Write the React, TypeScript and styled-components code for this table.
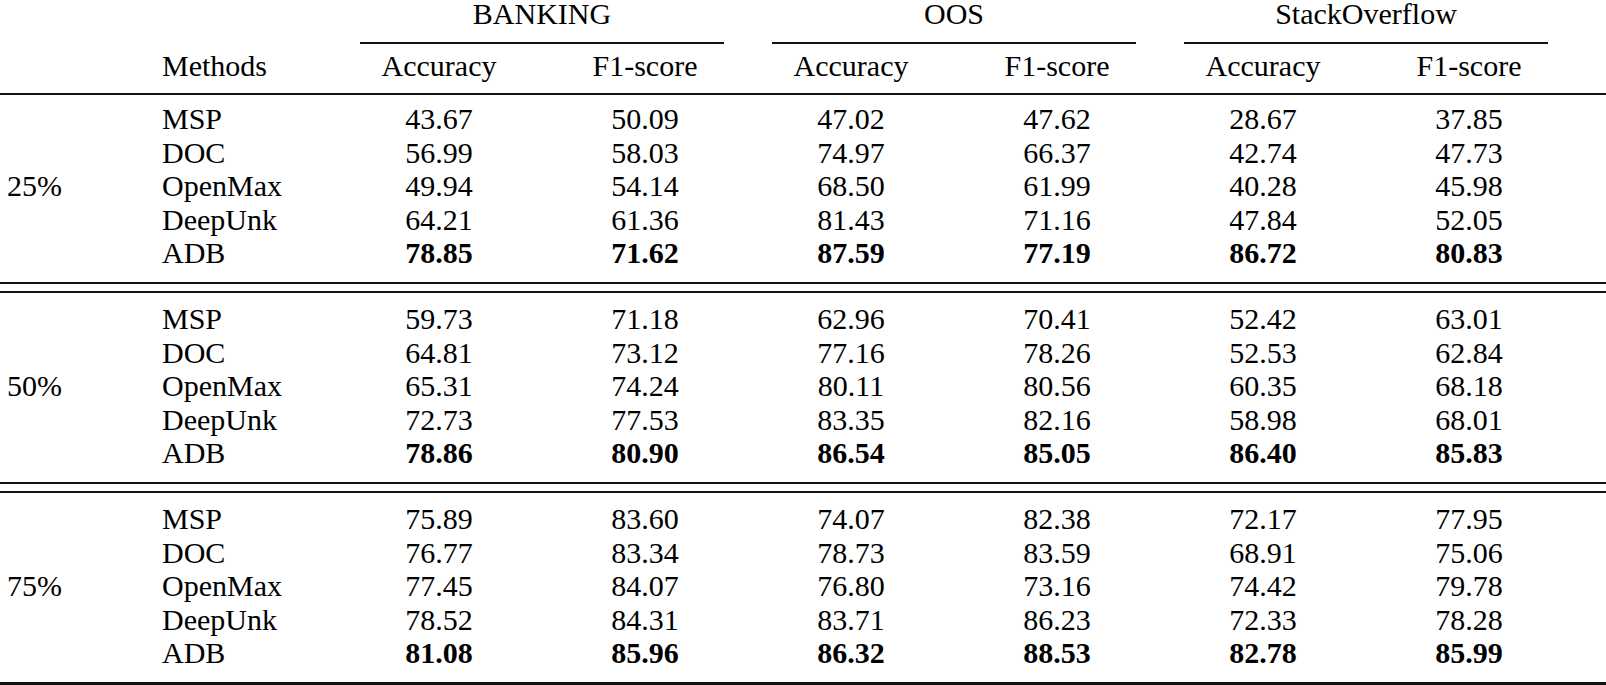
import React from "react";
import styled, { createGlobalStyle, css } from "styled-components";

const GlobalStyle = createGlobalStyle`
  html, body {
    margin: 0;
    padding: 0;
    background: #ffffff;
  }
  body {
    font-family: "Liberation Serif", "Times New Roman", serif;
    color: #000000;
  }
`;

const columns = css`
  display: grid;
  grid-template-columns: 162px 174px repeat(6, 206px) 34px;
`;

const Table = styled.div`
  width: 1606px;
  font-size: 30px;
`;

const GroupRow = styled.div`
  ${columns};
`;

const GroupCell = styled.div<{ $col: number }>`
  grid-column: ${(p) => p.$col} / span 2;
  display: flex;
  flex-direction: column;
`;

const GroupName = styled.div`
  line-height: 28px;
  height: 28px;
  text-align: center;
`;

const CMidRule = styled.div`
  height: 2px;
  margin: 14px 24px 0;
  background: #111;
`;

const HeaderRow = styled.div`
  ${columns};
  margin-top: 5px;
  line-height: 33.5px;
`;

const Cell = styled.div<{ $align?: "left" | "center"; $bold?: boolean; $col?: number }>`
  text-align: ${(p) => p.$align ?? "center"};
  font-weight: ${(p) => (p.$bold ? 700 : 400)};
  ${(p) => (p.$col ? `grid-column: ${p.$col};` : "")}
  white-space: nowrap;
`;

const Rule = styled.div<{ $thick?: number; $top?: number; $bottom?: number }>`
  height: ${(p) => p.$thick ?? 2}px;
  margin-top: ${(p) => p.$top ?? 0}px;
  margin-bottom: ${(p) => p.$bottom ?? 0}px;
  background: #111;
`;

const DoubleRule = styled.div`
  display: flex;
  flex-direction: column;
  gap: 7px;
  margin-top: 12.5px;
  margin-bottom: 9px;
`;

const Section = styled.div`
  ${columns};
  grid-auto-rows: 33.5px;
  line-height: 33.5px;
`;

const SectionLabel = styled.div`
  grid-column: 1;
  grid-row: 1 / span 5;
  align-self: center;
  padding-left: 7px;
`;

type Row = { method: string; values: string[] };
type Block = { label: string; rows: Row[] };

const data: Block[] = [
  {
    label: "25%",
    rows: [
      { method: "MSP", values: ["43.67", "50.09", "47.02", "47.62", "28.67", "37.85"] },
      { method: "DOC", values: ["56.99", "58.03", "74.97", "66.37", "42.74", "47.73"] },
      { method: "OpenMax", values: ["49.94", "54.14", "68.50", "61.99", "40.28", "45.98"] },
      { method: "DeepUnk", values: ["64.21", "61.36", "81.43", "71.16", "47.84", "52.05"] },
      { method: "ADB", values: ["78.85", "71.62", "87.59", "77.19", "86.72", "80.83"] },
    ],
  },
  {
    label: "50%",
    rows: [
      { method: "MSP", values: ["59.73", "71.18", "62.96", "70.41", "52.42", "63.01"] },
      { method: "DOC", values: ["64.81", "73.12", "77.16", "78.26", "52.53", "62.84"] },
      { method: "OpenMax", values: ["65.31", "74.24", "80.11", "80.56", "60.35", "68.18"] },
      { method: "DeepUnk", values: ["72.73", "77.53", "83.35", "82.16", "58.98", "68.01"] },
      { method: "ADB", values: ["78.86", "80.90", "86.54", "85.05", "86.40", "85.83"] },
    ],
  },
  {
    label: "75%",
    rows: [
      { method: "MSP", values: ["75.89", "83.60", "74.07", "82.38", "72.17", "77.95"] },
      { method: "DOC", values: ["76.77", "83.34", "78.73", "83.59", "68.91", "75.06"] },
      { method: "OpenMax", values: ["77.45", "84.07", "76.80", "73.16", "74.42", "79.78"] },
      { method: "DeepUnk", values: ["78.52", "84.31", "83.71", "86.23", "72.33", "78.28"] },
      { method: "ADB", values: ["81.08", "85.96", "86.32", "88.53", "82.78", "85.99"] },
    ],
  },
];

const groups = ["BANKING", "OOS", "StackOverflow"];

export default function App() {
  return (
    <>
      <GlobalStyle />
      <Table>
        <GroupRow>
          {groups.map((g, i) => (
            <GroupCell key={g} $col={3 + i * 2}>
              <GroupName>{g}</GroupName>
              <CMidRule />
            </GroupCell>
          ))}
        </GroupRow>
        <HeaderRow>
          <Cell $align="left" $col={2}>Methods</Cell>
          {groups.map((g) => (
            <React.Fragment key={g}>
              <Cell>Accuracy</Cell>
              <Cell>F1-score</Cell>
            </React.Fragment>
          ))}
        </HeaderRow>
        <Rule $thick={2} $top={10.5} $bottom={7} />
        {data.map((block, bi) => (
          <React.Fragment key={block.label}>
            <Section>
              <SectionLabel>{block.label}</SectionLabel>
              {block.rows.map((row) => {
                const bold = row.method === "ADB";
                return (
                  <React.Fragment key={row.method}>
                    <Cell $align="left" $col={2}>{row.method}</Cell>
                    {row.values.map((v, vi) => (
                      <Cell key={vi} $bold={bold}>{v}</Cell>
                    ))}
                  </React.Fragment>
                );
              })}
            </Section>
            {bi < data.length - 1 ? (
              <DoubleRule>
                <Rule $thick={2} />
                <Rule $thick={2} />
              </DoubleRule>
            ) : (
              <Rule $thick={3} $top={12.5} />
            )}
          </React.Fragment>
        ))}
      </Table>
    </>
  );
}
